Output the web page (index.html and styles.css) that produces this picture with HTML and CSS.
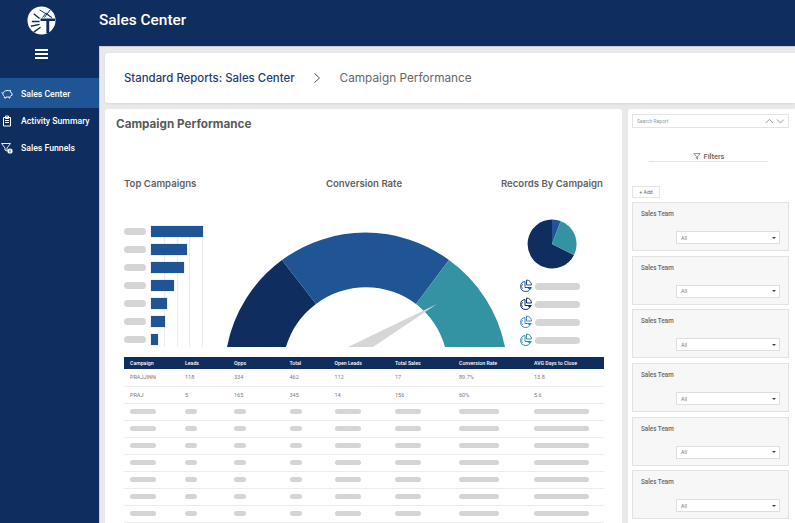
FILE: index.html
```html
<!DOCTYPE html>
<html lang="en">
<head>
<meta charset="utf-8">
<title>Sales Center</title>
<link rel="stylesheet" href="styles.css">
</head>
<body>
<div class="page">
  <aside class="sidebar">
    <svg class="logo" viewBox="0 0 30 30" aria-hidden="true">
      <circle cx="15" cy="15" r="14.5" fill="#fff"/>
      <path d="M14 13h15v2.500h-6V28h-3V15.500h-6z" fill="#0f2d5e"/>
      <path d="M13 4l13 8M24 4l-6 8M16 12l4-5 5 5" stroke="#0f2d5e" stroke-width="1" fill="none"/>
      <path d="M13 13L7 8M13 16H5M13 19l-9 2M14 22l-7 5" stroke="#0f2d5e" stroke-width="1.500" fill="none"/>
    </svg>
    <div class="burger"><span></span><span></span><span></span></div>
    <nav class="nav">
      <a class="nav-item active">
        <svg class="nav-icon" viewBox="0 0 12 12" aria-hidden="true"><path d="M2 5.500c.5-2 2-3 4-3 .8 0 1.500.1 2 .4l1.500-.6v1.600l1 1.300h.5v2.300h-1l-1 1.300V10H8V9H5v1H3.500V8.800C2.500 8.200 2 7 2 5.500zM2 5.500L.5 4.500" fill="none" stroke="#fff" stroke-width=".9"/></svg>
        Sales Center
      </a>
      <a class="nav-item">
        <svg class="nav-icon" viewBox="0 0 12 12" aria-hidden="true"><path d="M2.500 2.500h7v8.500h-7zM4.500 1h3v2.500h-3zM4 5.500h4M4 7.500h4" fill="none" stroke="#fff" stroke-width="1"/></svg>
        Activity Summary
      </a>
      <a class="nav-item">
        <svg class="nav-icon" viewBox="0 0 12 12" aria-hidden="true"><path d="M.5 1.500h9L6 6v3L4 8V6z" fill="none" stroke="#fff" stroke-width=".9"/><circle cx="9" cy="9" r="2.600" fill="#fff"/><path d="M9 7.500v3" stroke="#0f2d5e" stroke-width=".8"/></svg>
        Sales Funnels
      </a>
    </nav>
  </aside>

  <div class="workspace">
    <header class="topbar">Sales Center</header>
    <main class="content">
      <section class="breadcrumb">
        <span class="crumb-parent">Standard Reports: Sales Center</span>
        <svg class="crumb-sep" viewBox="0 0 8 12" aria-hidden="true"><path d="M1.500 1.500L6.500 6l-5 4.500" fill="none" stroke="#555" stroke-width="1"/></svg>
        <span class="crumb-current">Campaign Performance</span>
      </section>

      <div class="columns">
        <section class="report">
          <h1 class="report-title">Campaign Performance</h1>
          <div class="charts">
            <h2 class="chart-title">Top Campaigns</h2>
            <h2 class="chart-title center">Conversion Rate</h2>
            <h2 class="chart-title end">Records By Campaign</h2>

            <div class="bars">
              <div class="bar-row"><span class="pill label"></span><span class="bar" style="width:52px"></span></div>
              <div class="bar-row"><span class="pill label"></span><span class="bar" style="width:36px"></span></div>
              <div class="bar-row"><span class="pill label"></span><span class="bar" style="width:33px"></span></div>
              <div class="bar-row"><span class="pill label"></span><span class="bar" style="width:23px"></span></div>
              <div class="bar-row"><span class="pill label"></span><span class="bar" style="width:16px"></span></div>
              <div class="bar-row"><span class="pill label"></span><span class="bar" style="width:14px"></span></div>
              <div class="bar-row"><span class="pill label"></span><span class="bar" style="width:7px"></span></div>
            </div>

            <svg class="gauge" viewBox="0 0 278 128" aria-hidden="true">
              <path d="M0 128A141 141 0 0 1 55 41L89 85A83 83 0 0 0 59 128Z" fill="#0f2d5e"/>
              <path d="M55 41A141 141 0 0 1 222 41L189 85A83 83 0 0 0 89 85Z" fill="#1f5594"/>
              <path d="M222 41A141 141 0 0 1 278 128H218A83 83 0 0 0 189 85Z" fill="#3393a3"/>
              <path d="M210 85L146 128H121Z" fill="#d6d6d6"/>
            </svg>

            <div class="records">
              <svg class="pie" viewBox="0 0 50 50" aria-hidden="true">
                <path d="M25 25V.5A24.500 24.500 0 1 0 47 36Z" fill="#0f2d5e"/>
                <path d="M25 25V.5A24.500 24.500 0 0 1 33.700 2.100Z" fill="#1f5594"/>
                <path d="M25 25L33.700 2.100A24.500 24.500 0 0 1 47 36Z" fill="#3393a3"/>
              </svg>
              <ul class="legend">
                <li class="legend-row c1"><svg class="legend-icon" viewBox="0 0 14 14" aria-hidden="true"><path d="M6 2.500a5 5 0 1 0 5.500 6H6z" fill="none" stroke="currentColor"/><path d="M3.500 5a4 4 0 0 0 0 5" fill="none" stroke="currentColor" stroke-width=".8"/><path d="M7.500 1a5 5 0 0 1 5 5h-5z" fill="none" stroke="currentColor"/><path d="M8 8h5l-2.500 3z" fill="currentColor"/></svg><span class="pill legend-pill"></span></li>
                <li class="legend-row c2"><svg class="legend-icon" viewBox="0 0 14 14" aria-hidden="true"><path d="M6 2.500a5 5 0 1 0 5.500 6H6z" fill="none" stroke="currentColor"/><path d="M3.500 5a4 4 0 0 0 0 5" fill="none" stroke="currentColor" stroke-width=".8"/><path d="M7.500 1a5 5 0 0 1 5 5h-5z" fill="none" stroke="currentColor"/><path d="M8 8h5l-2.500 3z" fill="currentColor"/></svg><span class="pill legend-pill"></span></li>
                <li class="legend-row c3"><svg class="legend-icon" viewBox="0 0 14 14" aria-hidden="true"><path d="M6 2.500a5 5 0 1 0 5.500 6H6z" fill="none" stroke="currentColor"/><path d="M3.500 5a4 4 0 0 0 0 5" fill="none" stroke="currentColor" stroke-width=".8"/><path d="M7.500 1a5 5 0 0 1 5 5h-5z" fill="none" stroke="currentColor"/><path d="M8 8h5l-2.500 3z" fill="currentColor"/></svg><span class="pill legend-pill"></span></li>
                <li class="legend-row c4"><svg class="legend-icon" viewBox="0 0 14 14" aria-hidden="true"><path d="M6 2.500a5 5 0 1 0 5.500 6H6z" fill="none" stroke="currentColor"/><path d="M3.500 5a4 4 0 0 0 0 5" fill="none" stroke="currentColor" stroke-width=".8"/><path d="M7.500 1a5 5 0 0 1 5 5h-5z" fill="none" stroke="currentColor"/><path d="M8 8h5l-2.500 3z" fill="currentColor"/></svg><span class="pill legend-pill"></span></li>
              </ul>
            </div>
          </div>

          <table class="data">
            <colgroup><col class="c-a"><col class="c-b"><col class="c-c"><col class="c-d"><col class="c-e"><col class="c-f"><col class="c-g"><col class="c-h"></colgroup>
            <thead>
              <tr><th>Campaign</th><th>Leads</th><th>Opps</th><th>Total</th><th>Open Leads</th><th>Total Sales</th><th>Conversion Rate</th><th>AVG Days to Close</th></tr>
            </thead>
            <tbody>
              <tr><td>PRAJJINN</td><td>118</td><td>334</td><td>462</td><td>112</td><td>17</td><td>89.7%</td><td>13.8</td></tr>
              <tr><td>PRAJ</td><td>5</td><td>165</td><td>345</td><td>14</td><td>156</td><td>60%</td><td>5.6</td></tr>
              <tr><td><i class="pill p26"></i></td><td><i class="pill p12"></i></td><td><i class="pill p12"></i></td><td><i class="pill p12"></i></td><td><i class="pill p26"></i></td><td><i class="pill p26"></i></td><td><i class="pill p40"></i></td><td><i class="pill p55"></i></td></tr>
              <tr><td><i class="pill p26"></i></td><td><i class="pill p12"></i></td><td><i class="pill p12"></i></td><td><i class="pill p12"></i></td><td><i class="pill p26"></i></td><td><i class="pill p26"></i></td><td><i class="pill p40"></i></td><td><i class="pill p55"></i></td></tr>
              <tr><td><i class="pill p26"></i></td><td><i class="pill p12"></i></td><td><i class="pill p12"></i></td><td><i class="pill p12"></i></td><td><i class="pill p26"></i></td><td><i class="pill p26"></i></td><td><i class="pill p40"></i></td><td><i class="pill p55"></i></td></tr>
              <tr><td><i class="pill p26"></i></td><td><i class="pill p12"></i></td><td><i class="pill p12"></i></td><td><i class="pill p12"></i></td><td><i class="pill p26"></i></td><td><i class="pill p26"></i></td><td><i class="pill p40"></i></td><td><i class="pill p55"></i></td></tr>
              <tr><td><i class="pill p26"></i></td><td><i class="pill p12"></i></td><td><i class="pill p12"></i></td><td><i class="pill p12"></i></td><td><i class="pill p26"></i></td><td><i class="pill p26"></i></td><td><i class="pill p40"></i></td><td><i class="pill p55"></i></td></tr>
              <tr><td><i class="pill p26"></i></td><td><i class="pill p12"></i></td><td><i class="pill p12"></i></td><td><i class="pill p12"></i></td><td><i class="pill p26"></i></td><td><i class="pill p26"></i></td><td><i class="pill p40"></i></td><td><i class="pill p55"></i></td></tr>
              <tr><td><i class="pill p26"></i></td><td><i class="pill p12"></i></td><td><i class="pill p12"></i></td><td><i class="pill p12"></i></td><td><i class="pill p26"></i></td><td><i class="pill p26"></i></td><td><i class="pill p40"></i></td><td><i class="pill p55"></i></td></tr>
            </tbody>
          </table>
        </section>

        <aside class="panel">
          <div class="search">
            <span>Search Report</span>
            <svg class="search-arrows" viewBox="0 0 24 7" aria-hidden="true"><path d="M1 6l4.500-4.500L10 6M15 1.500L19.500 6 24 1.500" fill="none" stroke="#666" stroke-width=".8"/></svg>
          </div>
          <div class="filters-head">
            <svg class="funnel" viewBox="0 0 10 10" aria-hidden="true"><path d="M1 2h8L5.800 5.500V9L4.200 7.800V5.500z" fill="none" stroke="#555" stroke-width=".8"/></svg>
            Filters
          </div>
          <button class="add" type="button">+ Add</button>
          <div class="filter-list">
            <div class="filter"><div class="filter-name">Sales Team</div><div class="select"><span>All</span><i class="caret"></i></div></div>
            <div class="filter"><div class="filter-name">Sales Team</div><div class="select"><span>All</span><i class="caret"></i></div></div>
            <div class="filter"><div class="filter-name">Sales Team</div><div class="select"><span>All</span><i class="caret"></i></div></div>
            <div class="filter"><div class="filter-name">Sales Team</div><div class="select"><span>All</span><i class="caret"></i></div></div>
            <div class="filter"><div class="filter-name">Sales Team</div><div class="select"><span>All</span><i class="caret"></i></div></div>
            <div class="filter"><div class="filter-name">Sales Team</div><div class="select"><span>All</span><i class="caret"></i></div></div>
          </div>
        </aside>
      </div>
    </main>
  </div>
</div>
</body>
</html>
```

FILE: styles.css
```css
* { box-sizing: border-box; }
html, body { margin: 0; padding: 0; }
body { font-family: Roboto, "Liberation Sans", sans-serif; background: #e9e9e9; overflow: hidden; }

.page { display: flex; width: 795px; height: 523px; overflow: hidden; }

/* Sidebar */
.sidebar { width: 99px; flex: none; background: #0f2d5e; display: flex; flex-direction: column; align-items: center; }
.logo { width: 29px; height: 29px; margin-top: 6px; margin-left: -17px; display: block; }
.burger { margin-top: 14px; margin-left: -17px; width: 13px; display: flex; flex-direction: column; gap: 2.500px; }
.burger span { display: block; height: 1.500px; background: #fff; }
.nav { align-self: stretch; margin-top: 19px; display: flex; flex-direction: column; }
.nav-item { height: 27px; display: flex; align-items: center; gap: 8px; padding: 2px 0 0 1px; color: #fff; font-size: 8.700px; font-weight: 500; }
.nav-item.active { height: 30px; background: #1f5594; margin-bottom: -1px; }
.nav-icon { width: 12px; height: 12px; flex: none; }

/* Workspace */
.workspace { flex: 1; min-width: 0; display: flex; flex-direction: column; }
.topbar { height: 46px; flex: none; background: #0f2d5e; color: #fff; font-size: 15.400px; font-weight: 500; line-height: 41px; }
.content { flex: 1; min-height: 0; display: flex; flex-direction: column; gap: 6px; padding: 6px 0 0 6px; border-left: 1px solid #c9ced6; border-top: 1px solid #c9ced6; }

.breadcrumb { height: 50px; flex: none; margin-left: -1px; background: #fff; border-radius: 3px 0 0 3px; display: flex; align-items: center; padding-left: 19px; font-family: Inter, sans-serif; box-shadow: 0 1px 3px rgba(0,0,0,.08); }
.crumb-parent { color: #1d3d72; font-size: 11.400px; font-weight: 500; }
.crumb-sep { width: 8px; height: 12px; margin: 0 19px 0 18px; }
.crumb-current { color: #666; font-size: 11.800px; }

.columns { flex: 1; min-height: 0; display: flex; gap: 6px; margin-left: -1px; }

/* Report */
.report { width: 517px; flex: none; background: #fff; border-radius: 3px 3px 0 0; padding: 8px 18px 0 19px; }
.report-title { margin: 0 0 0 -8px; font-family: Inter, sans-serif; font-size: 11.700px; line-height: 14px; font-weight: 700; color: #5a5a5a; }

.charts { margin-top: 46px; display: grid; grid-template-columns: 103px 278px 98px; grid-template-rows: 14px 128px; row-gap: 28px; }
.chart-title { margin: 0; font-family: Inter, sans-serif; font-size: 9.600px; line-height: 14px; font-weight: 600; color: #5f5f5f; white-space: nowrap; }
.chart-title.center { justify-self: center; margin-right: 4px; }
.chart-title.end { justify-self: end; }

.pill { display: block; background: #d5d5d5; border-radius: 4px; }

.bars { padding-top: 7px; display: flex; flex-direction: column; gap: 7px; background-image: linear-gradient(#ececec, #ececec), linear-gradient(#ececec, #ececec), linear-gradient(#ececec, #ececec), linear-gradient(#ececec, #ececec); background-size: 1px 121px; background-repeat: no-repeat; background-position: 40px 7px, 53px 7px, 65px 7px, 78px 7px; }
.bar-row { display: flex; align-items: center; gap: 5px; height: 11px; }
.pill.label { width: 22px; height: 7px; flex: none; }
.bar { display: block; height: 11px; background: #1f5594; box-shadow: 0 0 1px #9db4d2; }

.gauge { width: 278px; height: 128px; display: block; }

.records { padding-left: 14px; }
.pie { width: 50px; height: 50px; display: block; margin-left: 8px; }
.legend { list-style: none; margin: 10px 0 0; padding: 0; display: flex; flex-direction: column; gap: 4px; }
.legend-row { display: flex; align-items: center; gap: 2px; height: 14px; }
.c1 { color: #1f5594; }
.c2 { color: #0f2d5e; }
.c3 { color: #4a86c8; }
.c4 { color: #3393a3; }
.legend-icon { width: 14px; height: 14px; flex: none; }
.pill.legend-pill { width: 45px; height: 7px; }

/* Table */
.data { margin-top: 10px; width: 480px; table-layout: fixed; border-collapse: collapse; }
.c-a { width: 55px; } .c-b { width: 49px; } .c-c { width: 55.500px; } .c-d { width: 45px; }
.c-e { width: 60.500px; } .c-f { width: 64px; } .c-g { width: 75px; } .c-h { width: 76px; }
.data th { height: 12px; padding: 0 0 0 6px; background: #0f2d5e; color: #fff; font-size: 5.200px; font-weight: 500; text-align: left; white-space: nowrap; }
.data td { height: 17px; padding: 0 0 0 6px; border-bottom: 1px solid #ececec; color: #7a7a7a; font-size: 5.500px; }
.p12 { width: 12px; height: 5px; }
.p26 { width: 26px; height: 5px; }
.p40 { width: 40px; height: 5px; }
.p55 { width: 55px; height: 5px; }

/* Panel */
.panel { flex: 1; min-width: 0; background: #fff; border-radius: 3px 0 0 0; padding: 5px 6px 0 4px; }
.search { height: 14px; border: 1px solid #e4e4e4; display: flex; align-items: center; justify-content: space-between; padding: 0 4px; font-size: 5px; color: #9a9a9a; }
.search-arrows { width: 19px; height: 6px; }
.filters-head { width: 119px; margin: 23px 0 0 17px; height: 11px; border-bottom: 1px solid #e4e4e4; display: flex; align-items: center; justify-content: center; gap: 3px; font-size: 7.500px; font-weight: 500; color: #666; }
.funnel { width: 8px; height: 8px; }
.add { display: block; margin: 24px 0 0; width: 28px; height: 12px; padding: 0; border: 1px solid #e4e4e4; background: #fff; font-family: Roboto, sans-serif; font-size: 5.200px; color: #666; }
.filter-list { margin-top: 4px; display: flex; flex-direction: column; gap: 4.700px; }
.filter { height: 49px; flex: none; background: #f7f7f7; border: 1px solid #e2e2e2; padding: 7px 8px 0 8px; }
.filter-name { font-size: 6.300px; font-weight: 500; color: #666; line-height: 8px; }
.select { margin: 13px 0 0 35px; height: 13px; background: #fff; border: 1px solid #dedede; display: flex; align-items: center; justify-content: space-between; padding: 0 3px 0 4px; font-size: 5.200px; color: #777; }
.caret { width: 0; height: 0; border-left: 2px solid transparent; border-right: 2px solid transparent; border-top: 2px solid #444; }
```
